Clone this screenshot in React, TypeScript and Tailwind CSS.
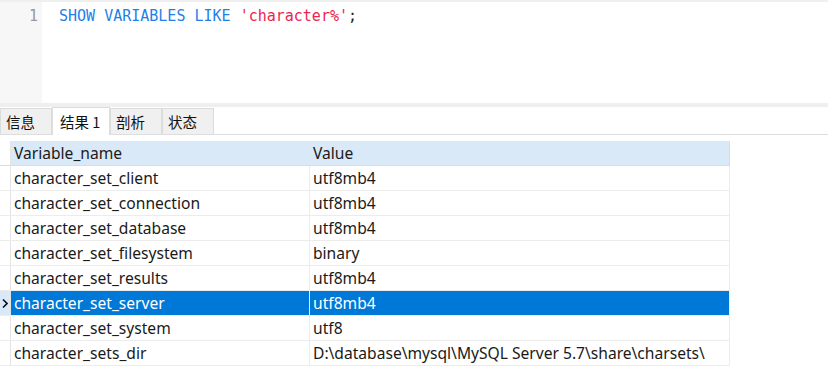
import React from 'react'

const rows: [string, string][] = [
  ['character_set_client', 'utf8mb4'],
  ['character_set_connection', 'utf8mb4'],
  ['character_set_database', 'utf8mb4'],
  ['character_set_filesystem', 'binary'],
  ['character_set_results', 'utf8mb4'],
  ['character_set_server', 'utf8mb4'],
  ['character_set_system', 'utf8'],
  ['character_sets_dir', 'D:\\database\\mysql\\MySQL Server 5.7\\share\\charsets\\'],
]

const tabs = ['信息', '结果 1', '剖析', '状态']

export default function App() {
  const selected = 5
  return (
    <div className="w-[828px] h-[378px] bg-white overflow-hidden font-['Noto_Sans','Noto_Sans_CJK_SC',sans-serif] text-[15.6px] text-[#1a1a1a]">
      {/* Editor */}
      <div className="h-[2px] bg-[#f0f0f0]" />
      <div className="flex h-[101px]">
        <div className="w-[42px] bg-[#f7f7f7] text-right pr-[4px] pt-[3px] font-['DejaVu_Sans_Mono',monospace] text-[15px] text-[#999]">
          1
        </div>
        <div className="flex-1 pl-[17px] pt-[3px] font-['DejaVu_Sans_Mono',monospace] text-[15px] leading-[22px] whitespace-pre">
          <span className="text-[#1f80ea]">SHOW VARIABLES LIKE </span>
          <span className="text-[#ec2450]">'character%'</span>
          <span className="text-[#222]">;</span>
        </div>
      </div>
      <div className="h-[4px] bg-[#efefef]" />

      {/* Tabs */}
      <div className="flex items-end h-[28px] border-b border-[#dedede] font-['Noto_Sans_CJK_SC',sans-serif] text-[14.5px]">
        {tabs.map((t, i) =>
          i === 1 ? (
            <div
              key={t}
              className="h-[28px] w-[58px] -mb-px bg-white border border-b-0 border-[#dcdcdc] flex items-center pl-[7px] text-[#111]"
            >
              {t}
            </div>
          ) : (
            <div
              key={t}
              className="h-[26px] w-[52px] bg-[#f0f0f0] border border-[#dcdcdc] border-b-0 flex items-center pl-[5px] pt-[1px] text-[#111]"
            >
              {t}
            </div>
          )
        )}
      </div>

      {/* Grid */}
      <div className="mt-[6px] w-[730px]">
        <div className="flex h-[25px] border-b border-[#dcdcdc]">
          <div className="w-[11px] bg-white border-r border-[#e4e4e4]" />
          <div className="w-[299px] bg-[#d9e9f7] border-r border-[#e6e6e6] pl-[3px] pt-[2px] flex items-center">
            Variable_name
          </div>
          <div className="flex-1 bg-[#d9e9f7] border-r border-[#dcdcdc] pl-[3px] pt-[2px] flex items-center">Value</div>
        </div>
        {rows.map(([name, value], i) => {
          const sel = i === selected
          return (
            <div key={name} className="flex h-[25px] border-b border-[#ececec]">
              <div
                className={
                  'w-[11px] border-r border-[#e4e4e4] flex items-center justify-center ' +
                  (sel ? 'bg-[#d9e9f7]' : 'bg-white')
                }
              >
                {sel && (
                  <svg width="6" height="9" viewBox="0 0 6 9">
                    <path d="M1 0.5 L5 4.5 L1 8.5" fill="none" stroke="#111" strokeWidth="1.6" />
                  </svg>
                )}
              </div>
              <div
                className={
                  'w-[299px] pl-[3px] pt-[2px] flex items-center border-r ' +
                  (sel ? 'bg-[#0078d7] text-white border-[#f0f0f0]' : 'border-[#ececec]')
                }
              >
                {name}
              </div>
              <div
                className={
                  'flex-1 pl-[3px] pt-[2px] flex items-center border-r border-[#ececec] whitespace-nowrap ' +
                  (sel ? 'bg-[#0078d7] text-white' : '')
                }
              >
                {value}
              </div>
            </div>
          )
        })}
      </div>
    </div>
  )
}
